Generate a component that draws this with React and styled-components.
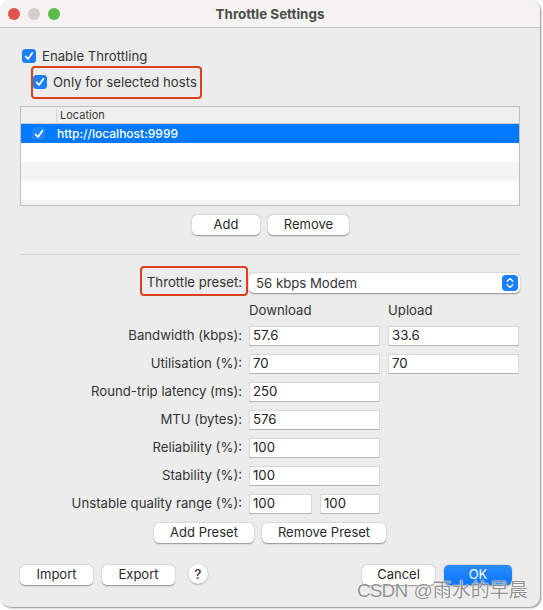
import React from 'react'
import styled, { createGlobalStyle } from 'styled-components'

const GlobalStyle = createGlobalStyle`
    html, body {
        margin: 0;
        padding: 0;
        background: #fff;
    }
    body {
        width: 543px;
        height: 610px;
        overflow: hidden;
        font-family: "Inter", "Liberation Sans", sans-serif;
        -webkit-font-smoothing: antialiased;
    }
`

const Window = styled.div`
    position: relative;
    box-sizing: border-box;
    width: 540px;
    height: 607px;
    background: #ececec;
    border-radius: 10px;
    box-shadow: 1px 1px 2px #8a8a8a;
    overflow: hidden;
    color: #333;
    font-size: 13.2px;
`

const TitleBar = styled.div`
    display: flex;
    align-items: center;
    box-sizing: border-box;
    height: 28px;
    padding: 0 0 0 8px;
    gap: 8px;
    background: #f4f3f2;
    border-bottom: 1px solid #c4c4c4;
`

const Light = styled.span`
    width: 12px;
    height: 12px;
    border-radius: 50%;
    background: ${p => p.$color};
`

const Title = styled.div`
    flex: 1;
    margin-right: 68px;
    text-align: center;
    font-weight: 700;
    font-size: 13.4px;
    color: #4c4c4c;
`

const Body = styled.div`
    display: flex;
    flex-direction: column;
    padding: 21px 20px 0 20px;
`

const CheckRow = styled.label`
    display: flex;
    align-items: center;
    gap: 6px;
    height: 14px;
    margin-left: ${p => p.$indent || 2}px;
    margin-bottom: ${p => p.$after || 0}px;
    position: relative;
`

const CheckBox = styled.span`
    display: flex;
    align-items: center;
    justify-content: center;
    width: 14px;
    height: 14px;
    border-radius: 3.5px;
    background: #1a7ffb;
    flex: none;
`

const Highlight = styled.span`
    position: absolute;
    box-sizing: border-box;
    border: 2.5px solid #d9401c;
    border-radius: 4px;
    left: ${p => p.$left}px;
    top: ${p => p.$top}px;
    width: ${p => p.$width}px;
    height: ${p => p.$height}px;
    pointer-events: none;
`

const Table = styled.div`
    box-sizing: border-box;
    height: 100px;
    border: 1px solid #bfbfbf;
    background: #f4f4f4;
    overflow: hidden;
`

const TableHead = styled.div`
    display: flex;
    align-items: center;
    box-sizing: border-box;
    height: 17px;
    background: #efefef;
    border-bottom: 1px solid #c9c9c9;
    font-size: 11px;
    color: #3a3a3a;
`

const HeadCell = styled.span`
    margin-left: 35px;
    padding-left: 3px;
    border-left: 1px solid #d4d4d4;
    line-height: 12px;
`

const TableRow = styled.div`
    display: flex;
    align-items: center;
    height: 19px;
    background: ${p => (p.$selected ? '#0079ff' : p.$alt ? '#f4f4f4' : '#fff')};
    color: #fff;
    font-weight: 500;
    font-size: 12px;
`

const RowCheck = styled.span`
    display: flex;
    align-items: center;
    justify-content: center;
    box-sizing: border-box;
    width: 13px;
    height: 13px;
    margin: 0 12px 0 11px;
    border-radius: 3px;
    background: #1a87ff;
`

const ButtonRow = styled.div`
    display: flex;
    justify-content: ${p => p.$justify || 'center'};
    gap: 8px;
    margin-top: ${p => p.$top || 0}px;
    padding-left: ${p => p.$pad || 0}px;
`

const Button = styled.button`
    box-sizing: border-box;
    width: ${p => p.$width}px;
    height: 20px;
    padding: 0 0 2px;
    border: 0;
    border-radius: 5px;
    background: ${p => (p.$primary ? 'linear-gradient(#2a8dff, #0a74f5)' : '#fff')};
    color: ${p => (p.$primary ? '#fff' : '#2a2a2a')};
    box-shadow: 0 0.5px 1.5px rgba(0, 0, 0, 0.4);
    font: inherit;
    font-size: 13px;
    line-height: 18px;
`

const Divider = styled.hr`
    width: 100%;
    height: 1px;
    margin: 19px 0 0;
    border: 0;
    background: #d2d2d2;
`

const PresetRow = styled.div`
    position: relative;
    display: grid;
    grid-template-columns: 229px 1fr;
    align-items: center;
    margin-top: 18px;
`

const Label = styled.span`
    padding: 0 7px 2px 0;
    text-align: right;
    white-space: nowrap;
    color: #333;
`

const Select = styled.div`
    display: flex;
    align-items: center;
    justify-content: space-between;
    box-sizing: border-box;
    height: 20px;
    padding: 0 2px 0 7px;
    border-radius: 5px;
    background: #fff;
    box-shadow: 0 0.5px 1.5px rgba(0, 0, 0, 0.4);
`

const Stepper = styled.span`
    display: flex;
    align-items: center;
    justify-content: center;
    width: 16px;
    height: 16px;
    border-radius: 4px;
    background: #1a7ffb;
`

const Form = styled.div`
    display: grid;
    grid-template-columns: 229px 139px 131px;
    row-gap: 8px;
    align-items: center;
    margin-top: 9px;
`

const ColHead = styled.span`
    line-height: 16px;
    color: #333;
`

const FieldGroup = styled.div`
    display: flex;
    gap: 8px;
`

const Field = styled.div`
    box-sizing: border-box;
    width: ${p => p.$width || 131}px;
    height: 20px;
    padding: 0 3px;
    background: #fff;
    border: 1px solid #d8d8d8;
    border-bottom-color: #b4b4b4;
    line-height: 17px;
    color: #222;
`

const Footer = styled.div`
    display: flex;
    align-items: center;
    margin-top: 22px;
    gap: 9px;
`

const Help = styled.span`
    display: flex;
    align-items: center;
    justify-content: center;
    width: 20px;
    height: 20px;
    margin: -2px 0 0 4px;
    border-radius: 50%;
    background: #fff;
    box-shadow: 0 0.5px 1.5px rgba(0, 0, 0, 0.4);
    font-weight: 500;
    font-size: 13px;
`

const FooterEnd = styled.div`
    display: flex;
    gap: 9px;
    margin-left: 145px;
`

const Watermark = styled.div`
    position: absolute;
    left: 357px;
    top: 578px;
    font-family: "Liberation Sans", "Noto Sans CJK SC", sans-serif;
    font-size: 19px;
    line-height: 26px;
    white-space: nowrap;
    color: rgba(125, 125, 125, 0.85);
    text-shadow: 0 0 1.5px #fff, 0 0 1.5px #fff;
`

const WatermarkLatin = styled.span`
    letter-spacing: -0.9px;
    margin-right: 1px;
`

const Tick = ({ size = 10 }) => (
    <svg width={size} height={size} viewBox="0 0 10 10" fill="none">
        <path d="M1.6 5.4 4 8 8.4 1.8" stroke="#fff" strokeWidth="1.7" strokeLinecap="round" strokeLinejoin="round" />
    </svg>
)

const FIELDS = [
    { label: 'Bandwidth (kbps):', values: ['57.6', '33.6'] },
    { label: 'Utilisation (%):', values: ['70', '70'] },
    { label: 'Round-trip latency (ms):', values: ['250'] },
    { label: 'MTU (bytes):', values: ['576'] },
    { label: 'Reliability (%):', values: ['100'] },
    { label: 'Stability (%):', values: ['100'] },
]

const App = () => (
    <>
        <GlobalStyle />
        <Window>
            <TitleBar>
                <Light $color="#e0524a" />
                <Light $color="#d0cfce" />
                <Light $color="#5fbb47" />
                <Title>Throttle Settings</Title>
            </TitleBar>
            <Body>
                <CheckRow $after={12}>
                    <CheckBox><Tick /></CheckBox>
                    Enable Throttling
                </CheckRow>
                <CheckRow $indent={13} $after={17}>
                    <Highlight $left={-2} $top={-9} $width={171} $height={33} />
                    <CheckBox><Tick /></CheckBox>
                    Only for selected hosts
                </CheckRow>
                <Table>
                    <TableHead><HeadCell>Location</HeadCell></TableHead>
                    <TableRow $selected>
                        <RowCheck><Tick /></RowCheck>
                        http://localhost:9999
                    </TableRow>
                    <TableRow />
                    <TableRow $alt />
                    <TableRow />
                </Table>
                <ButtonRow $top={9} $pad={1}>
                    <Button $width={68}>Add</Button>
                    <Button $width={81}>Remove</Button>
                </ButtonRow>
                <Divider />
                <PresetRow>
                    <Highlight $left={120} $top={-7} $width={108} $height={30} />
                    <Label>Throttle preset:</Label>
                    <Select>
                        56 kbps Modem
                        <Stepper>
                            <svg width="8" height="12" viewBox="0 0 8 12" fill="none">
                                <path d="M1.2 4.2 4 1.6l2.8 2.6M1.2 7.8 4 10.4l2.8-2.6" stroke="#fff" strokeWidth="1.3" strokeLinecap="round" strokeLinejoin="round" />
                            </svg>
                        </Stepper>
                    </Select>
                </PresetRow>
                <Form>
                    <span />
                    <ColHead>Download</ColHead>
                    <ColHead>Upload</ColHead>
                    {FIELDS.map(f => (
                        <React.Fragment key={f.label}>
                            <Label>{f.label}</Label>
                            <Field>{f.values[0]}</Field>
                            {f.values[1] ? <Field>{f.values[1]}</Field> : <span />}
                        </React.Fragment>
                    ))}
                    <Label>Unstable quality range (%):</Label>
                    <FieldGroup>
                        <Field $width={63}>100</Field>
                        <Field $width={60}>100</Field>
                    </FieldGroup>
                    <span />
                </Form>
                <ButtonRow $top={9} $justify="flex-start" $pad={134}>
                    <Button $width={100}>Add Preset</Button>
                    <Button $width={124}>Remove Preset</Button>
                </ButtonRow>
                <Footer>
                    <Button $width={73}>Import</Button>
                    <Button $width={73}>Export</Button>
                    <Help>?</Help>
                    <FooterEnd>
                        <Button $width={73}>Cancel</Button>
                        <Button $width={68} $primary>OK</Button>
                    </FooterEnd>
                </Footer>
            </Body>
            <Watermark><WatermarkLatin>CSDN</WatermarkLatin> @雨水的早晨</Watermark>
        </Window>
    </>
)

export default App
